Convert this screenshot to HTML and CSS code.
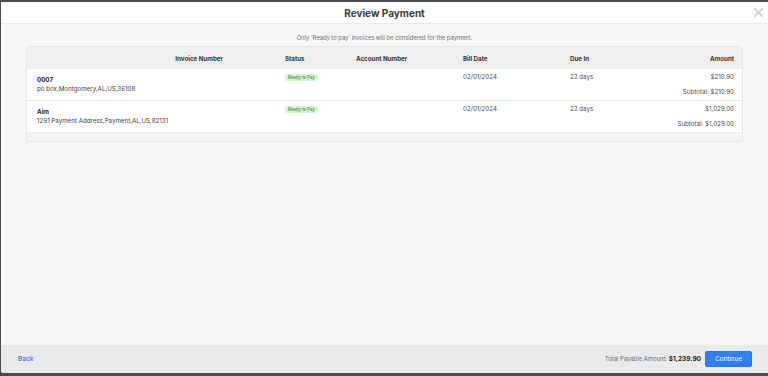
FILE: index.html
```html
<!DOCTYPE html>
<html lang="en">
<head>
    <meta charset="UTF-8">
    <title>Review Payment</title>
    <link rel="stylesheet" href="styles.css">
</head>
<body>

<div class="modal">
    <div class="modal-header">
        <h1>Review Payment</h1>
        <button class="close-button" aria-label="Close">
            <svg width="9" height="9" viewBox="0 0 10 10"><path d="M1 1 L9 9 M9 1 L1 9" stroke="#cfcfcf" stroke-width="2.2" stroke-linecap="round"/></svg>
        </button>
    </div>

    <div class="modal-body">
        <p class="note">Only 'Ready to pay' invoices will be considered for the payment.</p>

        <div class="invoice-table">
            <div class="table-row table-head">
                <div></div>
                <div>Invoice Number</div>
                <div>Status</div>
                <div>Account Number</div>
                <div>Bill Date</div>
                <div>Due In</div>
                <div class="amount">Amount</div>
            </div>

            <div class="table-row">
                <div class="vendor">
                    <strong>0007</strong>
                    <span>po box,Montgomery,AL,US,36108</span>
                </div>
                <div></div>
                <div><span class="badge">Ready to Pay</span></div>
                <div></div>
                <div>02/01/2024</div>
                <div>23 days</div>
                <div class="amount">
                    <span>$210.90</span>
                    <span class="subtotal">Subtotal: $210.90</span>
                </div>
            </div>

            <div class="table-row">
                <div class="vendor">
                    <strong>Aim</strong>
                    <span>1291 Payment Address,Payment,AL,US,82131</span>
                </div>
                <div></div>
                <div><span class="badge">Ready to Pay</span></div>
                <div></div>
                <div>02/01/2024</div>
                <div>23 days</div>
                <div class="amount">
                    <span>$1,029.00</span>
                    <span class="subtotal">Subtotal: $1,029.00</span>
                </div>
            </div>

            <div class="table-foot"></div>
        </div>
    </div>

    <div class="modal-footer">
        <a href="#" class="back-link">Back</a>
        <div class="total">
            <span>Total Payable Amount: <strong>$1,239.90</strong></span>
            <button class="continue-button">Continue</button>
        </div>
    </div>
</div>

</body>
</html>
```

FILE: styles.css
```css
* {
    margin: 0;
    padding: 0;
    box-sizing: border-box;
}

body {
    background: #4b4b4b;
    height: 100vh;
    padding: 2px 0 3px 1px;
    font-family: 'Inter', sans-serif;
    color: #333;
}

.modal {
    height: 100%;
    display: flex;
    flex-direction: column;
    background: #f6f6f6;
    border-radius: 0 0 0 3px;
    overflow: hidden;
}

.modal-header {
    position: relative;
    height: 22px;
    background: #fff;
    border-bottom: 1px solid #ececec;
    display: flex;
    justify-content: center;
    align-items: center;
}

.modal-header h1 {
    font-size: 10px;
    font-weight: 700;
    color: #3a3a3a;
}

.close-button {
    position: absolute;
    right: 5px;
    top: 6px;
    background: none;
    border: none;
    display: flex;
}

.modal-body {
    flex: 1;
    padding: 10px 25px 0 25px;
}

.note {
    text-align: center;
    font-size: 5.8px;
    color: #707070;
    margin-bottom: 5px;
}

.invoice-table {
    border: 1px solid #e6e6e6;
    border-radius: 3px;
    overflow: hidden;
    background: #fff;
}

.table-row {
    display: grid;
    grid-template-columns: 140px 108px 71px 107px 107px 1fr 100px;
    padding: 4px 8px 0 10px;
    height: 32px;
    border-bottom: 1px solid #ebebeb;
    font-size: 6.2px;
    color: #4a4a4a;
}

.table-head {
    height: 22px;
    padding-top: 0;
    align-items: center;
    background: #efefef;
    border-bottom: none;
    font-weight: 700;
    color: #333;
}

.table-head > div:nth-child(2) {
    text-align: right;
    padding-right: 62px;
    margin-left: -110px;
}

.vendor {
    display: flex;
    flex-direction: column;
    gap: 2px;
    padding-top: 3px;
    color: #444;
}

.vendor strong {
    color: #222;
}

.amount {
    display: flex;
    flex-direction: column;
    align-items: flex-end;
    gap: 8px;
}

.badge {
    display: inline-block;
    background: #d6f6d6;
    color: #3d9b3d;
    font-size: 4.3px;
    font-weight: 600;
    padding: 1px 3px;
    border-radius: 2px;
}

.table-foot {
    height: 8px;
    background: #f3f3f3;
}

.modal-footer {
    height: 28px;
    background: #e8eaeb;
    display: flex;
    justify-content: space-between;
    align-items: center;
    padding: 0 16px 0 17px;
}

.back-link {
    color: #3b82f6;
    font-size: 6.5px;
    font-weight: 600;
    text-decoration: none;
}

.total {
    display: flex;
    align-items: center;
    gap: 4px;
    font-size: 5.9px;
    color: #6b6b6b;
}

.total strong {
    color: #222;
    font-size: 6.5px;
}

.continue-button {
    background: #2d7ff9;
    color: #fff;
    border: 1px solid #2a75e6;
    border-radius: 2px;
    font-family: 'Inter', sans-serif;
    font-size: 6.3px;
    width: 47px;
    height: 16px;
}
```
